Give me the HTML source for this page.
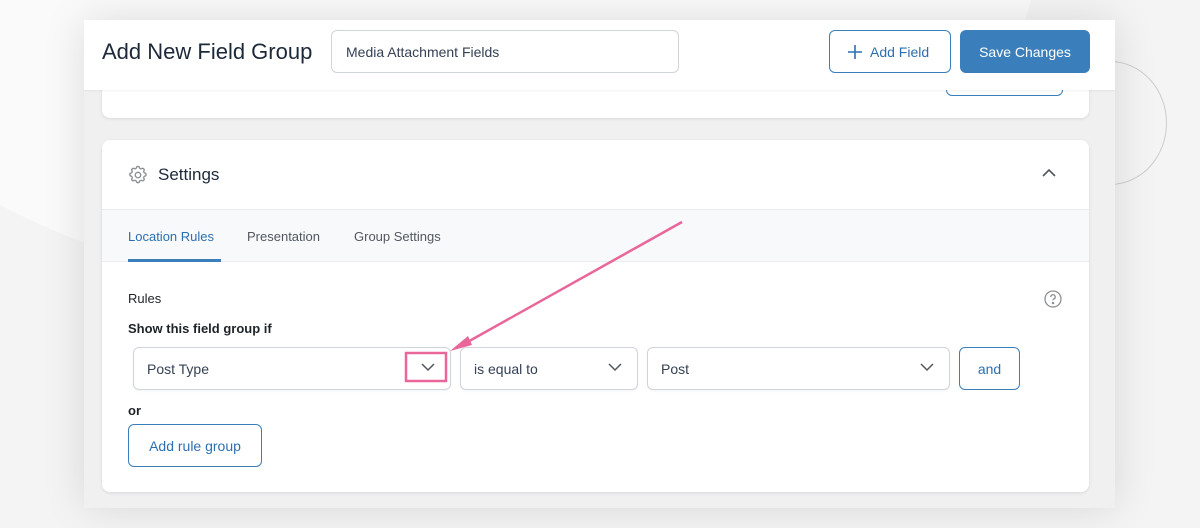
<!DOCTYPE html>
<html><head><style>
*{box-sizing:border-box;margin:0;padding:0}
body{width:1200px;height:528px;overflow:hidden;position:relative;background:#f4f4f5;font-family:"Liberation Sans",sans-serif;color:#1d2327}
.bgshape{position:absolute;left:-200px;top:-420px;width:1240px;height:720px;border-radius:50%;background:#fafafa}
.circ{position:absolute;left:1053px;top:61px;width:114px;height:124px;border-radius:50%;border:1px solid #ccc}
.panel{position:absolute;left:84px;top:20px;width:1031px;height:488px;background:#f0f0f1;box-shadow:0 0 40px rgba(0,0,0,.12);overflow:hidden}
.hdr{position:absolute;left:0;top:0;width:1031px;height:70px;background:#fff;box-shadow:0 1px 2px rgba(0,0,0,.06);z-index:2}
.abs{position:absolute}
.card{position:absolute;background:#fff;border-radius:8px;box-shadow:0 1px 3px rgba(0,0,0,.1)}
.sel{position:absolute;top:327px;height:43px;border:1px solid #d0d5dd;border-radius:6px;background:#fff;font-size:14px;color:#344054;padding:13px 0 0 13px;box-shadow:0 1px 2px rgba(16,24,40,.05)}
.btn{position:absolute;border:1px solid #3a7fbb;border-radius:6px;color:#2c6fb0;font-size:14px;text-align:center}
</style></head><body>
<div class="bgshape"></div>
<div class="circ"></div>
<div class="panel">
 <div class="hdr">
  <div class="abs" style="left:18px;top:19px;font-size:22px;color:#1d2939">Add New Field Group</div>
  <div class="abs" style="left:247px;top:10px;width:348px;height:43px;border:1px solid #d0d5dd;border-radius:6px;font-size:14px;padding:13px 0 0 14px;color:#344054">Media Attachment Fields</div>
  <div class="btn" style="left:745px;top:10px;width:122px;height:43px;padding:13px 0 0 40px;text-align:left">
   <svg class="abs" style="left:17px;top:13px" width="16" height="16" viewBox="0 0 16 16"><path d="M8 1v14M1 8h14" stroke="#2c6fb0" stroke-width="1.6"/></svg>Add Field</div>
  <div class="abs" style="left:876px;top:10px;width:130px;height:43px;background:#3a7fbb;border-radius:6px;color:#fff;font-size:14px;text-align:center;padding-top:14px">Save Changes</div>
 </div>
 <div class="card" style="left:18px;top:40px;width:987px;height:58px">
  <div class="abs" style="left:844px;top:-1px;width:117px;height:37px;border:1px solid #3a7fbb;border-radius:6px"></div>
 </div>
 <div class="card" style="left:18px;top:120px;width:987px;height:352px;overflow:hidden">
  <svg class="abs" style="left:25px;top:24px" width="22" height="22" viewBox="0 0 24 24" fill="none" stroke="#8c8f94" stroke-width="1.5"><path d="M10.3 3.9c.4-1.6 2.9-1.6 3.3 0a1.7 1.7 0 0 0 2.6 1.1c1.4-.9 3.2.8 2.3 2.3a1.7 1.7 0 0 0 1.1 2.6c1.6.4 1.6 2.9 0 3.3a1.7 1.7 0 0 0-1.1 2.6c.9 1.4-.8 3.2-2.3 2.3a1.7 1.7 0 0 0-2.6 1.1c-.4 1.6-2.9 1.6-3.3 0a1.7 1.7 0 0 0-2.6-1.1c-1.4.9-3.2-.8-2.3-2.3a1.7 1.7 0 0 0-1.1-2.6c-1.6-.4-1.6-2.9 0-3.3a1.7 1.7 0 0 0 1.1-2.6c-.9-1.4.8-3.2 2.3-2.3a1.7 1.7 0 0 0 2.6-1.1z"/><circle cx="12" cy="12" r="3"/></svg>
  <div class="abs" style="left:56px;top:25px;font-size:17px;color:#1d2939">Settings</div>
  <svg class="abs" style="left:940px;top:28px" width="14" height="10" viewBox="0 0 14 10"><path d="M1 8l6-6 6 6" fill="none" stroke="#50575e" stroke-width="1.6"/></svg>
  <div class="abs" style="left:0;top:69px;width:987px;height:53px;background:#f8f9fb;border-top:1px solid #eaecf0;border-bottom:1px solid #eaecf0">
   <div class="abs" style="left:26px;top:19px;font-size:13px;color:#2c6fb0">Location Rules</div>
   <div class="abs" style="left:26px;top:49px;width:93px;height:3px;background:#3a7fbb"></div>
   <div class="abs" style="left:145px;top:19px;font-size:13px;color:#50575e">Presentation</div>
   <div class="abs" style="left:252px;top:19px;font-size:13px;color:#50575e">Group Settings</div>
  </div>
  <div class="abs" style="left:26px;top:151px;font-size:13px;color:#1d2327">Rules</div>
  <div class="abs" style="left:26px;top:181px;font-size:13px;font-weight:bold;color:#1d2327">Show this field group if</div>
  <svg class="abs" style="left:942px;top:150px" width="18" height="18" viewBox="0 0 18 18" fill="none" stroke="#8c8f94" stroke-width="1.3"><circle cx="9" cy="9" r="8"/><path d="M6.8 7a2.2 2.2 0 1 1 3 2c-.6.3-.8.7-.8 1.3"/><circle cx="9" cy="13" r=".6" fill="#8c8f94"/></svg>
  <div class="abs" style="left:26px;top:263px;font-size:13px;font-weight:bold">or</div>
  <div class="btn" style="left:26px;top:284px;width:134px;height:43px;padding-top:13px">Add rule group</div>
 </div>
 <div class="sel" style="left:49px;width:318px">Post Type</div>
 <div class="sel" style="left:376px;width:178px">is equal to</div>
 <div class="sel" style="left:563px;width:303px">Post</div>
 <div class="btn" style="left:875px;top:327px;width:61px;height:43px;padding-top:13px">and</div>
 <svg class="abs" style="left:0;top:0" width="1031" height="488">
  <g fill="none" stroke="#50575e" stroke-width="1.5"><path d="M338 344l6 6 6-6"/><path d="M525 344l6 6 6-6"/><path d="M837 344l6 6 6-6"/></g>
  <rect x="322" y="333" width="40" height="28" fill="none" stroke="#e9669a" stroke-width="2.5"/>
  <line x1="598" y1="202" x2="380" y2="324" stroke="#e9669a" stroke-width="2.5"/>
  <path d="M366 331l18-15 4 9z" fill="#e9669a"/>
 </svg>
</div>
</body></html>
